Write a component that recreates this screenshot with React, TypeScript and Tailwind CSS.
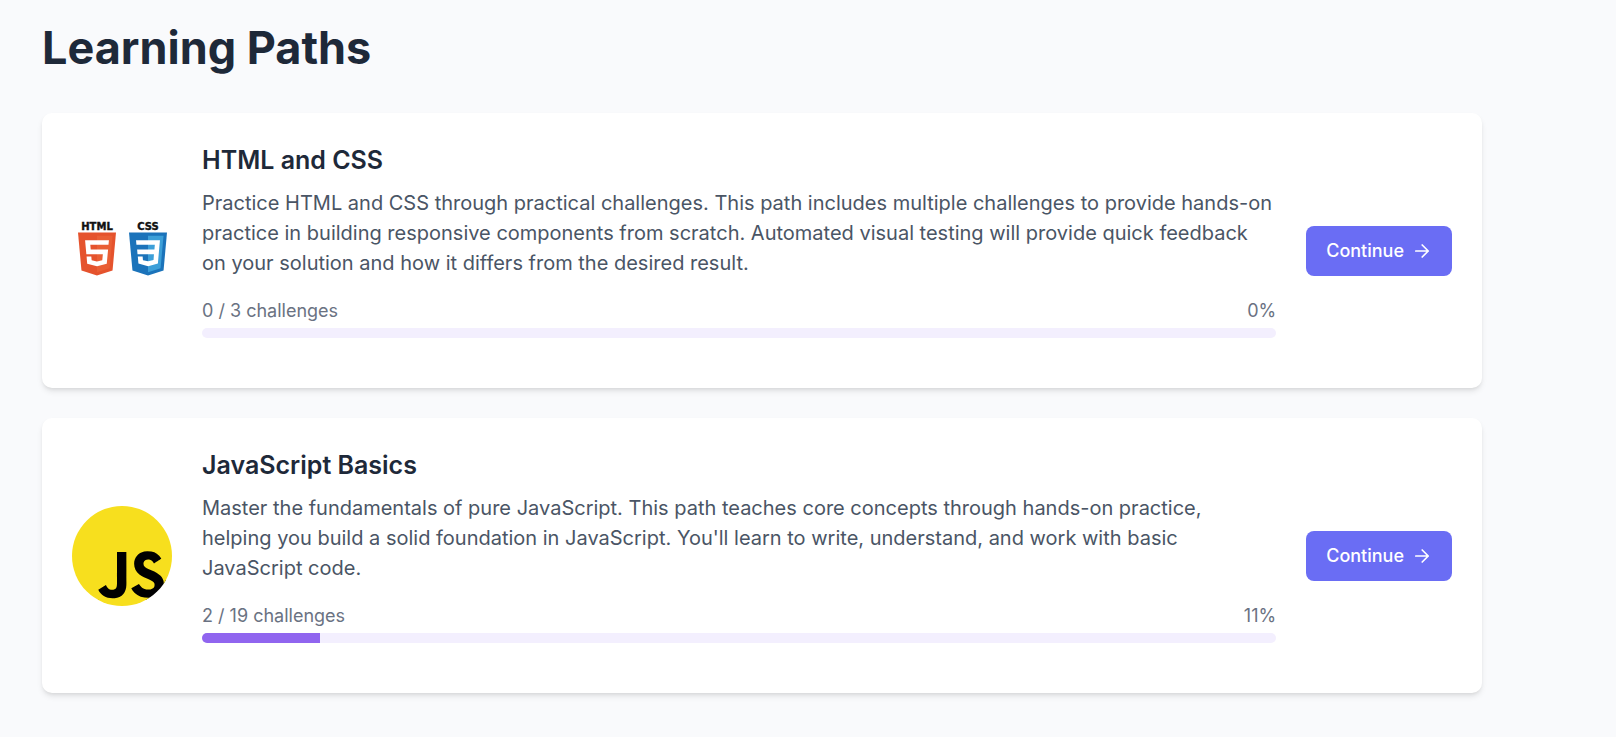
import { SiJavascript } from "react-icons/si";

type Path = {
  id: string;
  title: string;
  description: string;
  done: number;
  total: number;
  logo: () => React.ReactNode;
};

function HtmlCssLogo() {
  return (
    <svg viewBox="0 0 100 100" className="size-[100px]" role="img" aria-label="HTML and CSS">
      <g className="font-['DejaVu_Sans'] text-[10px] font-bold" fill="#111" stroke="#111" strokeWidth=".4" textAnchor="middle">
        <text x="25" y="29">HTML</text>
        <text x="76" y="29">CSS</text>
      </g>
      <svg x="6" y="28.5" width="38" height="49" viewBox="0 0 384 512" preserveAspectRatio="none">
        <path d="M0 32l34.9 395.8L191.5 480l157.6-52.2L384 32H0z" fill="#e5532d" />
        <path d="M192 64v383l127-42 30-341z" fill="#e95f35" />
        <path
          fill="#fff"
          d="M308.2 159.9H124.4l4.1 49.4h175.6l-13.6 148.4-97.9 27v.3h-1.1l-98.7-27.3-6-75.8h47.7L138 320l53.5 14.5 53.7-14.5 6-62.2H84.3L71.5 112.2h241.1l-4.4 47.7z"
        />
      </svg>
      <svg x="57" y="28.5" width="38" height="49" viewBox="0 0 384 512" preserveAspectRatio="none">
        <path d="M0 32l34.9 395.8L192 480l157.1-52.2L384 32H0z" fill="#1b73ba" />
        <path d="M192 64v383l127-42 30-341z" fill="#3c9fd8" />
        <path
          fill="#fff"
          d="M71 112h242l-5 52-16 191-99 29-98-29-6-74h49l3 39 52 13 55-15 4-59H86l-4-49h175l4-50H75z"
        />
      </svg>
    </svg>
  );
}

function JsLogo() {
  return (
    <svg viewBox="0 0 100 100" className="size-[100px] rounded-full" role="img" aria-label="JavaScript">
      {/* dark backing shows through the letters */}
      <path d="M26 44h68v50H26z" fill="#000" />
      <SiJavascript size={100} color="#f7df1e" />
    </svg>
  );
}

function Arrow() {
  return (
    <svg viewBox="0 0 20 20" className="size-5" fill="none" stroke="currentColor" strokeWidth="1.7" strokeLinecap="round" strokeLinejoin="round" aria-hidden="true">
      <path d="M3.8 10h12.4M10.2 4l6 6-6 6" />
    </svg>
  );
}

const paths: Path[] = [
  {
    id: "html-css",
    title: "HTML and CSS",
    description:
      "Practice HTML and CSS through practical challenges. This path includes multiple challenges to provide hands-on practice in building responsive components from scratch. Automated visual testing will provide quick feedback on your solution and how it differs from the desired result.",
    done: 0,
    total: 3,
    logo: HtmlCssLogo,
  },
  {
    id: "javascript",
    title: "JavaScript Basics",
    description:
      "Master the fundamentals of pure JavaScript. This path teaches core concepts through hands-on practice, helping you build a solid foundation in JavaScript. You'll learn to write, understand, and work with basic JavaScript code.",
    done: 2,
    total: 19,
    logo: JsLogo,
  },
];

function PathCard({ path }: { path: Path }) {
  const percent = Math.round((path.done / path.total) * 100);
  const Logo = path.logo;

  return (
    <li className="flex items-center gap-[30px] rounded-[10px] bg-white p-[30px] shadow-md">
      <div className="shrink-0">
        <Logo />
      </div>
      <div className="min-w-0 flex-1 pb-5">
        <h2 className="text-[25px] leading-[35px] font-semibold text-gray-800">{path.title}</h2>
        <p className="mt-[10px] text-[20px] leading-[30px] text-gray-600">{path.description}</p>
        <div className="mt-5 flex justify-between text-[18px] leading-[25px] text-gray-500">
          <span>{path.done} / {path.total} challenges</span>
          <span>{percent}%</span>
        </div>
        <div
          role="progressbar"
          aria-label={path.title}
          aria-valuenow={percent}
          className="mt-[5px] h-[10px] overflow-hidden rounded-full bg-[#f3effe]"
        >
          <div className="h-full bg-[#9065ef]" style={{ width: `${percent}%` }} />
        </div>
      </div>
      <button className="flex h-[50px] shrink-0 items-center gap-2 rounded-lg bg-[#6a6df4] px-5 text-[18px] font-medium text-white">
        Continue
        <Arrow />
      </button>
    </li>
  );
}

export default function App() {
  return (
    <main className="min-h-screen bg-[#f9fafc] px-[42px] py-[23px] font-['Inter',sans-serif]">
      <h1 className="text-[45px] leading-[50px] font-bold text-gray-800">Learning Paths</h1>
      <ul className="mt-10 flex max-w-[1440px] flex-col gap-[30px]">
        {paths.map((p) => (
          <PathCard key={p.id} path={p} />
        ))}
      </ul>
    </main>
  );
}
